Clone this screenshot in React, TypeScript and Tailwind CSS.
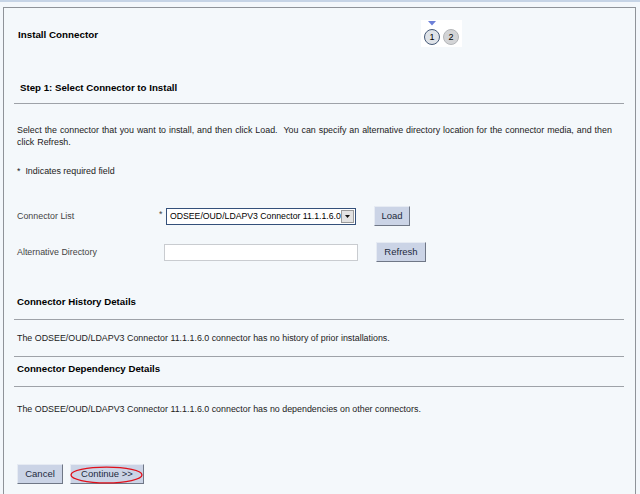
import React from "react";

const F = { fontFamily: '"Liberation Sans", Arial, sans-serif' };

function Btn({ w, children }: { w: string; children: React.ReactNode }) {
  return (
    <div
      className={`${w} h-[20px] flex items-center justify-center bg-[#cbd4e6] border border-t-[#e6ebf3] border-l-[#e6ebf3] border-r-[#6f7786] border-b-[#6f7786] text-[9.5px] text-[#1d2a3d]`}
    >
      {children}
    </div>
  );
}

function Rule({ mt }: { mt: string }) {
  return <div className={`${mt} ml-[10px] w-[610px] h-px bg-[#9ea2a8]`} />;
}

export default function App() {
  return (
    <div className="w-[640px] h-[494px] bg-[#f3f7fb] overflow-hidden" style={F}>
      <div className="h-[2px] bg-[#c6d4e6]" />
      <div className="ml-[3px] mt-[5px] w-[633px] h-[487px] border-l border-t border-r border-[#8f9399] bg-[#f4f8fb] text-[#222] text-[8.9px] leading-[12px]">
        {/* header */}
        <div className="mt-[12px] flex h-[27px] items-center">
          <div className="pl-[14px] w-[417px] font-bold text-[9.8px] text-black pt-[3px]">Install Connector</div>
          <div className="relative w-[41px] h-[27px] bg-white">
            <svg className="absolute left-[7px] top-[1px]" width="8" height="5" viewBox="0 0 8 5">
              <path d="M0 0 H8 L4 4.5 Z" fill="#6d80d8" />
            </svg>
            <div className="absolute left-[3px] top-[9px] flex gap-[3px]">
              <div className="w-[16px] h-[16px] rounded-full border border-[#465a78] bg-[#dfe3e8] flex items-center justify-center text-[9px] text-black">1</div>
              <div className="w-[16px] h-[16px] rounded-full border border-[#b4b6b9] bg-[#d3d4d6] flex items-center justify-center text-[9px] text-black">2</div>
            </div>
          </div>
        </div>

        <div className="mt-[35px] pl-[16px] font-bold text-[9.7px] text-black">Step 1: Select Connector to Install</div>
        <Rule mt="mt-[9px]" />

        <div className="mt-[20px] pl-[13px] whitespace-nowrap [word-spacing:0.5px]">
          Select the connector that you want to install, and then click Load.&nbsp;&nbsp;You can specify an alternative directory location for the connector media, and then
          <br />
          click Refresh.
        </div>

        <div className="mt-[17px] pl-[13px]">*&nbsp; Indicates required field</div>

        <div className="mt-[29px] pl-[13px] flex items-center h-[20px]">
          <div className="w-[142px] text-[#444]">Connector List</div>
          <div className="w-[7px] self-start mt-[2px] text-[#444]">*</div>
          <div className="w-[190px] h-[17px] border border-[#34507a] bg-white flex items-center">
            <div className="flex-1 pl-[3px] text-[8.7px] text-black whitespace-nowrap overflow-hidden">ODSEE/OUD/LDAPV3 Connector 11.1.1.6.0</div>
            <div className="w-[13px] h-[13px] mr-[1px] bg-[#e2e2e2] border border-[#9a9a9a] flex items-center justify-center">
              <svg width="5" height="3" viewBox="0 0 5 3"><path d="M0 0 H5 L2.5 3 Z" fill="#111" /></svg>
            </div>
          </div>
          <div className="w-[18px]" />
          <Btn w="w-[36px]">Load</Btn>
        </div>

        <div className="mt-[16px] pl-[13px] flex items-center h-[20px]">
          <div className="w-[147px] text-[#444]">Alternative Directory</div>
          <div className="w-[194px] h-[17px] border border-[#c9ccd0] bg-white" />
          <div className="w-[18px]" />
          <Btn w="w-[50px]">Refresh</Btn>
        </div>

        <div className="mt-[34px] pl-[13px] font-bold text-[9.7px] text-black">Connector History Details</div>
        <Rule mt="mt-[11px]" />
        <div className="mt-[12px] pl-[13px]">The ODSEE/OUD/LDAPV3 Connector 11.1.1.6.0 connector has no history of prior installations.</div>
        <Rule mt="mt-[12px]" />
        <div className="mt-[6px] pl-[13px] font-bold text-[9.7px] text-black">Connector Dependency Details</div>
        <Rule mt="mt-[11px]" />
        <div className="mt-[16px] pl-[13px]">The ODSEE/OUD/LDAPV3 Connector 11.1.1.6.0 connector has no dependencies on other connectors.</div>

        <div className="mt-[49px] pl-[13px] flex gap-[7px]">
          <Btn w="w-[46px]">Cancel</Btn>
          <div className="relative">
            <Btn w="w-[74px]">Continue &gt;&gt;</Btn>
            <svg className="absolute left-0 top-[2px]" width="74" height="18" viewBox="0 0 74 18">
              <ellipse cx="36.5" cy="9" rx="35.5" ry="7.8" fill="none" stroke="#e0101a" strokeWidth="1.3" />
            </svg>
          </div>
        </div>
      </div>
    </div>
  );
}
